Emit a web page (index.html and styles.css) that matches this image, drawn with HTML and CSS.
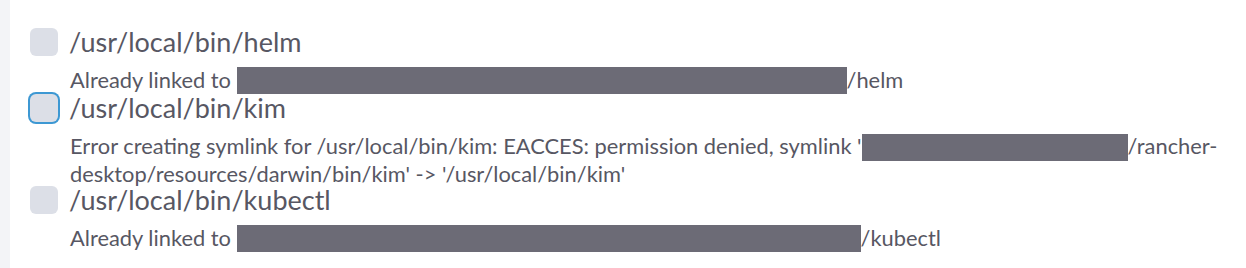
FILE: index.html
```html
<!DOCTYPE html>
<html lang="en">
<head>
<meta charset="UTF-8" />
<title>Path management</title>
<link rel="stylesheet" href="styles.css">
</head>
<body>
  <div class="page">
    <div class="edge"></div>
    <div class="content">
      <div class="item">
        <label class="row">
          <span class="check"></span>
          <span class="path">/usr/local/bin/helm</span>
        </label>
        <div class="desc">Already linked to <span class="redact" style="width:610px"></span>/helm</div>
      </div>

      <div class="item">
        <label class="row">
          <span class="check focused"></span>
          <span class="path">/usr/local/bin/kim</span>
        </label>
        <div class="desc">Error creating symlink for /usr/local/bin/kim: EACCES: permission denied, symlink '<span class="redact" style="width:266px"></span>/rancher-desktop/resources/darwin/bin/kim' -&gt; '/usr/local/bin/kim'</div>
      </div>

      <div class="item">
        <label class="row">
          <span class="check"></span>
          <span class="path">/usr/local/bin/kubectl</span>
        </label>
        <div class="desc">Already linked to <span class="redact" style="width:624px"></span>/kubectl</div>
      </div>
    </div>
  </div>
</body>
</html>
```

FILE: styles.css
```css
* {
  box-sizing: border-box;
}
body {
  margin: 0;
  font-family: Lato, 'Noto Sans', sans-serif;
  color: #575763;
  background: #fff;
}

.page {
  display: flex;
  min-height: 268px;
}

.edge {
  width: 10px;
  background: #f3f4f7;
}

.content {
  flex: 1;
  padding: 28px 20px 0 20px;
}

.row {
  display: flex;
  align-items: center;
  gap: 11px;
  height: 28px;
}

.check {
  width: 28px;
  height: 28px;
  border-radius: 6px;
  background: #dcdfe7;
  flex: none;
}

.check.focused {
  box-shadow: 0 0 0 2px #3d98d3;
}

.path {
  font-size: 27px;
  line-height: 28px;
}

.desc {
  margin-top: 11px;
  padding-left: 40px;
  font-size: 21.85px;
  line-height: 25px;
}

.redact {
  display: inline-block;
  height: 27px;
  vertical-align: middle;
  margin-top: -3px;
  background: #6c6b76;
}
```
